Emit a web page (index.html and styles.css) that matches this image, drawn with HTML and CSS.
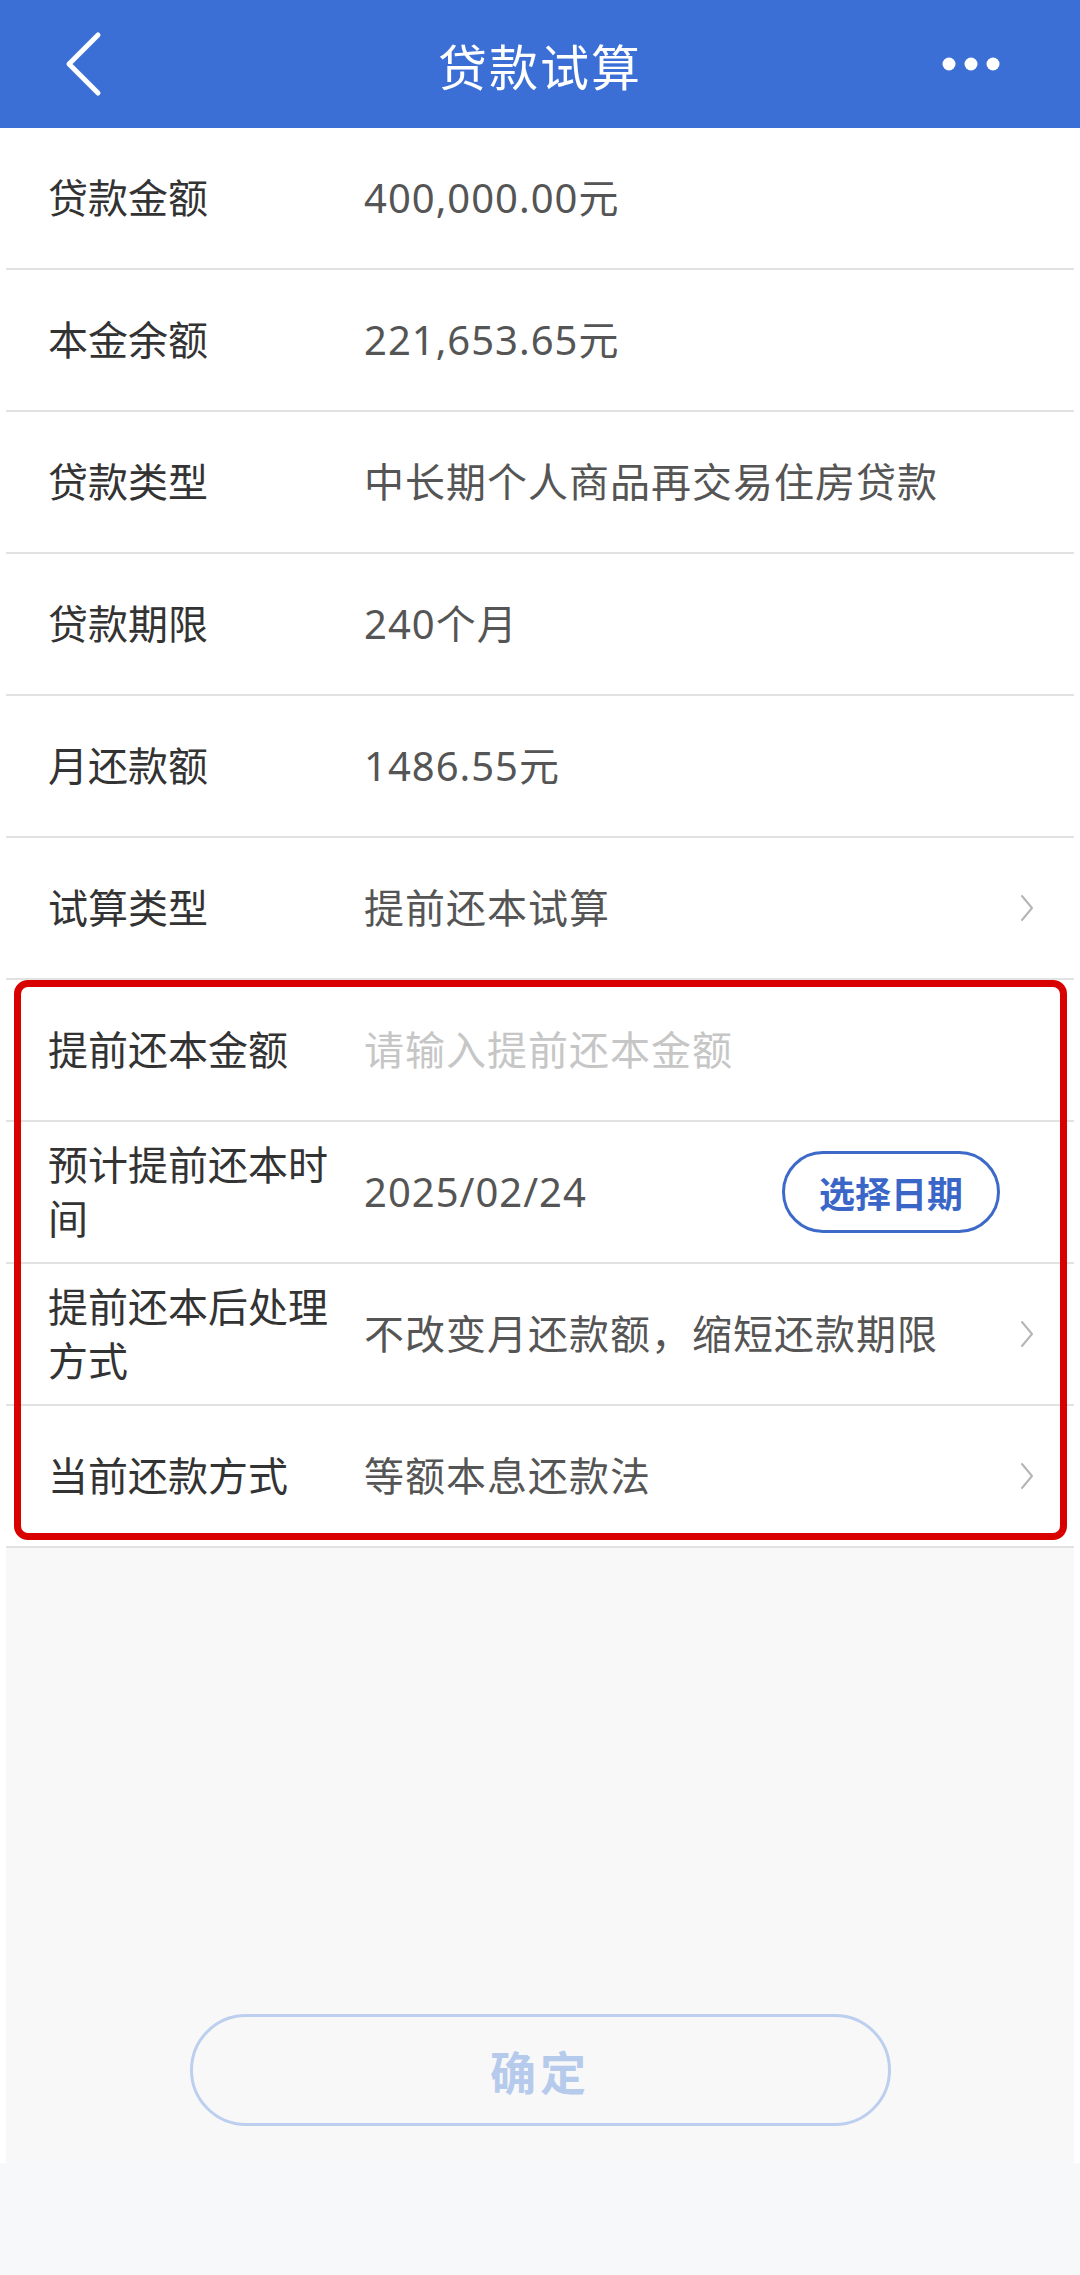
FILE: index.html
```html
<!DOCTYPE html>
<html lang="zh-CN">

<head>
    <meta charset="utf-8">
    <title>贷款试算</title>
    <link rel="stylesheet" href="styles.css">
</head>

<body>
    <header class="topbar">
        <span class="back">
            <svg width="40" height="66" viewBox="0 0 40 66">
                <polyline points="35,4 6,33 35,62" fill="none" stroke="#fff" stroke-width="5" stroke-linecap="round" stroke-linejoin="round" />
            </svg>
        </span>
        <h1>贷款试算</h1>
        <span class="more">
            <svg width="58" height="16" viewBox="0 0 58 16">
                <circle cx="7" cy="8" r="6.5" fill="#fff" />
                <circle cx="29" cy="8" r="6.5" fill="#fff" />
                <circle cx="51" cy="8" r="6.5" fill="#fff" />
            </svg>
        </span>
    </header>

    <main class="page">
        <div class="form-list">
            <div class="row">
                <span class="label">贷款金额</span>
                <span class="value">400,000.00元</span>
            </div>
            <div class="row">
                <span class="label">本金余额</span>
                <span class="value">221,653.65元</span>
            </div>
            <div class="row">
                <span class="label">贷款类型</span>
                <span class="value">中长期个人商品再交易住房贷款</span>
            </div>
            <div class="row">
                <span class="label">贷款期限</span>
                <span class="value">240个月</span>
            </div>
            <div class="row">
                <span class="label">月还款额</span>
                <span class="value">1486.55元</span>
            </div>
            <div class="row">
                <span class="label">试算类型</span>
                <span class="value">提前还本试算</span>
                <svg class="arrow" width="16" height="30" viewBox="0 0 16 30">
                    <polyline points="3,3 13,15 3,27" fill="none" stroke="#b5b5b5" stroke-width="2" stroke-linecap="round" stroke-linejoin="round" />
                </svg>
            </div>

            <div class="marked">
                <div class="row">
                    <span class="label">提前还本金额</span>
                    <span class="value placeholder">请输入提前还本金额</span>
                </div>
                <div class="row">
                    <span class="label">预计提前还本时间</span>
                    <span class="value">2025/02/24</span>
                    <button class="pick-date">选择日期</button>
                </div>
                <div class="row">
                    <span class="label">提前还本后处理方式</span>
                    <span class="value">不改变月还款额，缩短还款期限</span>
                    <svg class="arrow" width="16" height="30" viewBox="0 0 16 30">
                        <polyline points="3,3 13,15 3,27" fill="none" stroke="#b5b5b5" stroke-width="2" stroke-linecap="round" stroke-linejoin="round" />
                    </svg>
                </div>
                <div class="row">
                    <span class="label">当前还款方式</span>
                    <span class="value">等额本息还款法</span>
                    <svg class="arrow" width="16" height="30" viewBox="0 0 16 30">
                        <polyline points="3,3 13,15 3,27" fill="none" stroke="#b5b5b5" stroke-width="2" stroke-linecap="round" stroke-linejoin="round" />
                    </svg>
                </div>
            </div>
        </div>

        <div class="blank">
            <button class="confirm">确定</button>
        </div>
    </main>
</body>
</html>
```

FILE: styles.css
```css
body {
    margin: 0;
    background-color: #f7f8fa;
    font-family: "Noto Sans", "Noto Sans CJK SC", sans-serif;
    min-height: 2275px;
}

.topbar {
    height: 128px;
    background-color: #3c6fd5;
    display: grid;
    grid-template-columns: 1fr auto 1fr;
    align-items: center;
}

.topbar h1 {
    margin: 0;
    color: #fff;
    font-size: 49px;
    font-weight: 400;
    letter-spacing: 2px;
}

.back {
    display: flex;
    padding-left: 63px;
}

.more {
    display: flex;
    justify-content: flex-end;
    padding-right: 80px;
}

.page {
    background-color: #fff;
    padding: 0 6px;
}

.row {
    display: flex;
    align-items: center;
    height: 140px;
    padding: 0 39px 0 42px;
    border-bottom: 2px solid #e2e2e2;
    background-color: #fff;
    font-size: 40px;
    line-height: 54px;
}

.label {
    flex: none;
    width: 316px;
    color: #333;
}

.value {
    flex: 1;
    color: #555;
    letter-spacing: 1px;
}

.placeholder {
    color: #c6c6c6;
}

.arrow {
    flex: none;
}

.marked {
    position: relative;
}

.marked::after {
    content: "";
    position: absolute;
    top: 0;
    left: 8px;
    right: 7px;
    bottom: 8px;
    border: 7px solid #d90000;
    border-radius: 14px;
    pointer-events: none;
}

.pick-date {
    flex: none;
    width: 218px;
    height: 82px;
    margin-right: 35px;
    border: 3px solid #3d69c9;
    border-radius: 41px;
    background-color: #fff;
    color: #3a66c8;
    font-family: inherit;
    font-size: 36px;
    font-weight: 700;
    padding: 0;
}

.blank {
    height: 615px;
    box-sizing: border-box;
    padding-top: 466px;
    background-color: #f8f8f8;
    display: flex;
    justify-content: center;
    align-items: flex-start;
}

.confirm {
    width: 701px;
    height: 112px;
    border: 3px solid #bccfee;
    border-radius: 56px;
    background-color: transparent;
    color: #b6caec;
    font-family: inherit;
    font-size: 46px;
    font-weight: 700;
    letter-spacing: 4px;
    padding: 0;
}
```
